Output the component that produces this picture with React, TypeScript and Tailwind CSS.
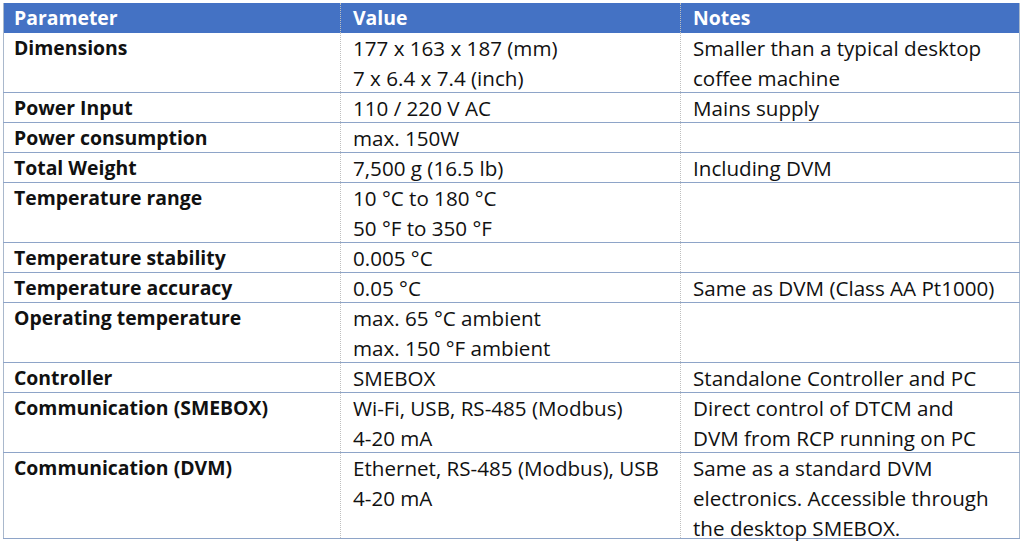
import {FC} from "react";

interface ISpecRow {
    param: string;
    value: string[];
    notes: string[];
    lines: 1 | 2 | 3;
}

const rows: ISpecRow[] = [
    {param: "Dimensions", value: ["177 x 163 x 187 (mm)", "7 x 6.4 x 7.4 (inch)"], notes: ["Smaller than a typical desktop", "coffee machine"], lines: 2},
    {param: "Power Input", value: ["110 / 220 V AC"], notes: ["Mains supply"], lines: 1},
    {param: "Power consumption", value: ["max. 150W"], notes: [], lines: 1},
    {param: "Total Weight", value: ["7,500 g (16.5 lb)"], notes: ["Including DVM"], lines: 1},
    {param: "Temperature range", value: ["10 °C to 180 °C", "50 °F to 350 °F"], notes: [], lines: 2},
    {param: "Temperature stability", value: ["0.005 °C"], notes: [], lines: 1},
    {param: "Temperature accuracy", value: ["0.05 °C"], notes: ["Same as DVM (Class AA Pt1000)"], lines: 1},
    {param: "Operating temperature", value: ["max. 65 °C ambient", "max. 150 °F ambient"], notes: [], lines: 2},
    {param: "Controller", value: ["SMEBOX"], notes: ["Standalone Controller and PC"], lines: 1},
    {param: "Communication (SMEBOX)", value: ["Wi-Fi, USB, RS-485 (Modbus)", "4-20 mA"], notes: ["Direct control of DTCM and", "DVM from RCP running on PC"], lines: 2},
    {param: "Communication (DVM)", value: ["Ethernet, RS-485 (Modbus), USB", "4-20 mA"], notes: ["Same as a standard DVM", "electronics. Accessible through", "the desktop SMEBOX."], lines: 3},
];

// row height minus the 1px collapsed border
const cellHeight = {1: "h-[29px]", 2: "h-[59px]", 3: "h-[85px]"};

const Lines: FC<{lines: string[]; size: 1 | 2 | 3}> = ({lines, size}) => (
    <div className={`${cellHeight[size]} overflow-visible`}>
        {lines.map((line, i) => (
            <div key={i} className="h-[30px] leading-[30px] whitespace-nowrap">{line}</div>
        ))}
    </div>
);

const App: FC = () => {
    return (
        <div className="w-[1024px] h-[545px] bg-white pt-[3px] pl-[3px] overflow-hidden"
             style={{fontFamily: "'Open Sans', 'Noto Sans', sans-serif"}}>
            <table className="border-collapse table-fixed w-[1016px] text-[20.6px] text-[#111] border-l border-r border-[#a9b8cc]">
                <colgroup>
                    <col className="w-[337px]"/>
                    <col className="w-[340px]"/>
                    <col className="w-[339px]"/>
                </colgroup>
                <thead className="bg-[#4472c4] text-white font-bold text-[19.4px]">
                <tr>
                    <th className="p-0 pl-[10px] text-left align-top border-r border-dotted border-[#bfbfbf]">
                        <div className="h-[30px] leading-[30px]">Parameter</div>
                    </th>
                    <th className="p-0 pl-3 text-left align-top border-r border-dotted border-[#bfbfbf]">
                        <div className="h-[30px] leading-[30px]">Value</div>
                    </th>
                    <th className="p-0 pl-3 text-left align-top">
                        <div className="h-[30px] leading-[30px]">Notes</div>
                    </th>
                </tr>
                </thead>
                <tbody>
                {rows.map((row) => (
                    <tr key={row.param} className="border-b border-[#8ea4c8]">
                        <td className="p-0 pl-[10px] align-top font-bold text-[19.4px] border-r border-dotted border-[#bfbfbf]">
                            <Lines lines={[row.param]} size={row.lines}/>
                        </td>
                        <td className="p-0 pl-3 align-top border-r border-dotted border-[#bfbfbf]">
                            <Lines lines={row.value} size={row.lines}/>
                        </td>
                        <td className="p-0 pl-3 align-top">
                            <Lines lines={row.notes} size={row.lines}/>
                        </td>
                    </tr>
                ))}
                </tbody>
            </table>
        </div>
    );
}

export default App;
